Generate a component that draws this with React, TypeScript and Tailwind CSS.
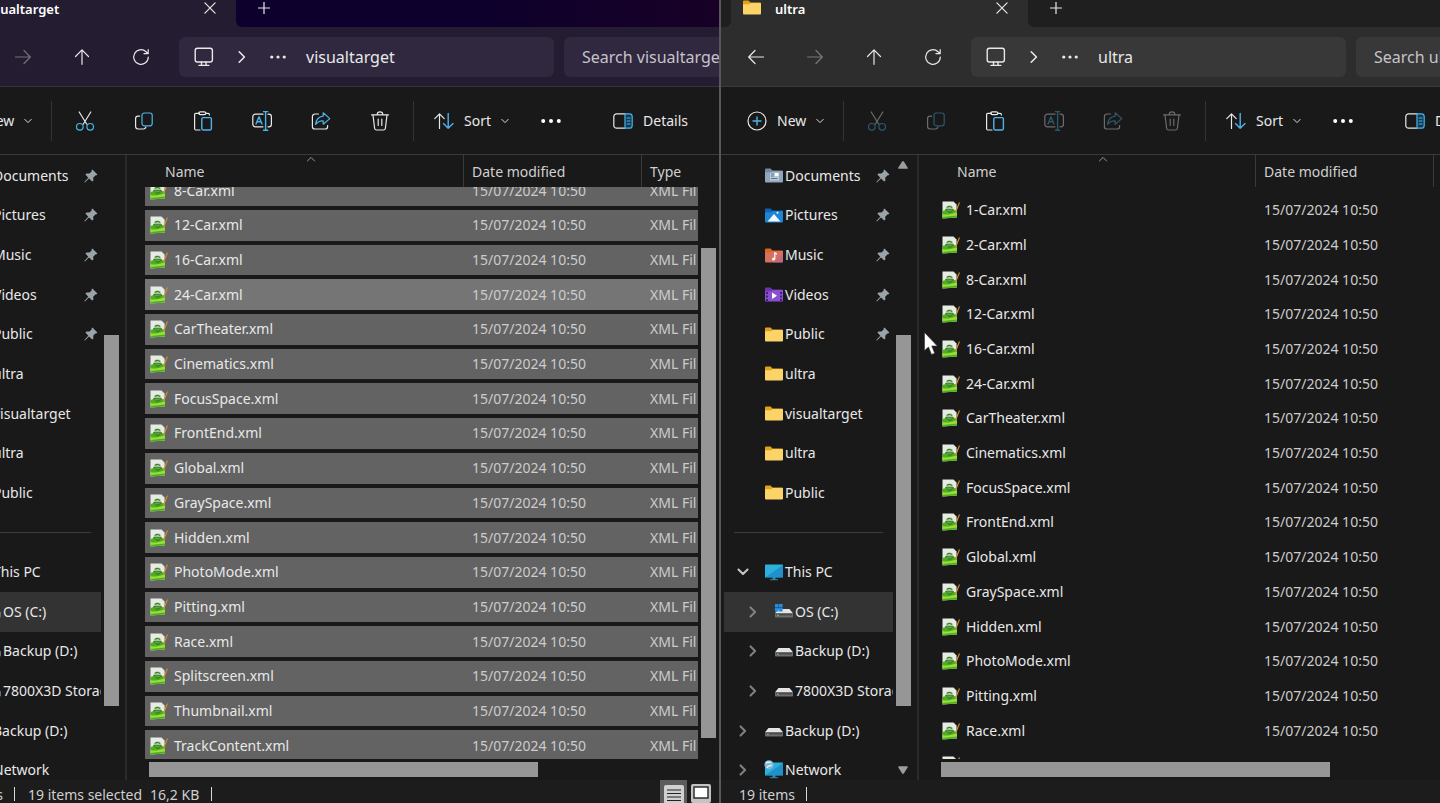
import { ReactNode } from "react";
import clsx from "clsx";

type Theme = "violet" | "dark";

type ExplorerProps = {
  title: string;
  theme: Theme;
  files: string[];
  selected?: boolean;
  hoveredFile?: string;
};

const FILES = [
  "1-Car.xml",
  "2-Car.xml",
  "8-Car.xml",
  "12-Car.xml",
  "16-Car.xml",
  "24-Car.xml",
  "CarTheater.xml",
  "Cinematics.xml",
  "FocusSpace.xml",
  "FrontEnd.xml",
  "Global.xml",
  "GraySpace.xml",
  "Hidden.xml",
  "PhotoMode.xml",
  "Pitting.xml",
  "Race.xml",
  "Splitscreen.xml",
  "Thumbnail.xml",
  "TrackContent.xml",
];

const QUICK_ACCESS = [
  { label: "Documents", icon: "documents", pinned: true },
  { label: "Pictures", icon: "pictures", pinned: true },
  { label: "Music", icon: "music", pinned: true },
  { label: "Videos", icon: "videos", pinned: true },
  { label: "Public", icon: "folder", pinned: true },
  { label: "ultra", icon: "folder" },
  { label: "visualtarget", icon: "folder" },
  { label: "ultra", icon: "folder" },
  { label: "Public", icon: "folder" },
];

const DEVICES = [
  { label: "This PC", icon: "pc", open: true },
  { label: "OS (C:)", icon: "os", nested: true, current: true },
  { label: "Backup (D:)", icon: "drive", nested: true },
  { label: "7800X3D Storage", icon: "drive", nested: true },
  { label: "Backup (D:)", icon: "drive" },
  { label: "Network", icon: "network" },
];

/**
 * Shared wrapper for the 20px line icons.
 */
const Line = ({
  children,
  className = "size-5",
}: {
  children: ReactNode;
  className?: string;
}) => (
  <svg
    viewBox="0 0 20 20"
    fill="none"
    stroke="currentColor"
    strokeWidth="1.2"
    strokeLinecap="round"
    strokeLinejoin="round"
    aria-hidden="true"
    className={clsx("shrink-0", className)}
  >
    {children}
  </svg>
);

const BLUE = "#4cb4ea";

const ArrowLeft = () => (
  <Line>
    <path d="M17.5 10H3M9 3.5L2.7 10 9 16.5" />
  </Line>
);

const ArrowRight = () => (
  <Line>
    <path d="M2.5 10H17M11 3.5l6.3 6.5-6.3 6.5" />
  </Line>
);

const ArrowUp = () => (
  <Line>
    <path d="M10 17.3V3M3.5 9.5L10 2.8l6.5 6.7" />
  </Line>
);

const Refresh = () => (
  <Line>
    <path d="M17.3 10A7.3 7.3 0 1 1 15 4.7l2 1.8M17.2 2.5v4.2H13" />
  </Line>
);

const Monitor = () => (
  <Line>
    <rect x="1.2" y="1.2" width="17.2" height="13.8" rx="2.2" strokeWidth="1.4" />
    <path d="M7.5 15v3M12 15v3M5 18.4h9.8" strokeWidth="1.4" />
  </Line>
);

const Chevron = ({ className, weight = 2 }: { className?: string; weight?: number }) => (
  <Line className={className}>
    <path d="M6.5 3.5L13 10l-6.5 6.5" strokeWidth={weight} />
  </Line>
);

const Dots = ({ className }: { className?: string }) => (
  <svg viewBox="0 0 20 20" className={className} fill="currentColor" aria-hidden="true">
    <circle cx="2.2" cy="10" r="2" />
    <circle cx="10" cy="10" r="2" />
    <circle cx="17.8" cy="10" r="2" />
  </svg>
);

const SmallDown = () => (
  <Line className="size-2">
    <path d="M2 6l8 8 8-8" strokeWidth="2.4" />
  </Line>
);

const NewIcon = () => (
  <Line>
    <circle cx="10" cy="10" r="9" />
    <path d="M10 6v8M6 10h8" stroke={BLUE} strokeWidth="1.4" />
  </Line>
);

const CutIcon = () => (
  <Line>
    <path d="M4.2 1l7.6 12.2M15.8 1L8.2 13.2" />
    <circle cx="4.8" cy="15.8" r="3.3" stroke={BLUE} />
    <circle cx="15.2" cy="15.8" r="3.3" stroke={BLUE} />
  </Line>
);

const CopyIcon = () => (
  <Line>
    <path d="M5.6 5.2H4a2.4 2.4 0 0 0-2.4 2.4v8A2.4 2.4 0 0 0 4 18h5.4a2.6 2.6 0 0 0 2.5-2" />
    <rect x="8" y="2" width="10.2" height="12.8" rx="2.2" stroke={BLUE} />
  </Line>
);

const PasteIcon = () => (
  <Line>
    <path d="M6.5 2.3H2.8a1.2 1.2 0 0 0-1.2 1.2v14.3A1.2 1.2 0 0 0 2.8 19H7M13 2.3h2.2a1.2 1.2 0 0 1 1.2 1.2V4" />
    <rect x="5.8" y="0.8" width="7" height="2.8" rx="1.4" />
    <rect x="8.8" y="6.6" width="9.6" height="12.4" rx="1.4" stroke={BLUE} strokeWidth="1.4" />
  </Line>
);

const RenameIcon = () => (
  <Line>
    <path d="M11 3.2H3.4A2.6 2.6 0 0 0 .8 5.8v7.4a2.6 2.6 0 0 0 2.6 2.6H11M16 3.2h.8a2.6 2.6 0 0 1 2.6 2.6v7.4a2.6 2.6 0 0 1-2.6 2.6H16" />
    <path d="M4 13l3-7.2L10 13M5 10.8h4M11.5.6h4.200M11.5 19.200h4.200M13.600.6v18.600" stroke={BLUE} strokeWidth="1.4" />
  </Line>
);

const ShareIcon = () => (
  <Line>
    <path d="M7.5 3H4A2.6 2.6 0 0 0 1.4 5.6V15.4A2.6 2.6 0 0 0 4 18h10a2.6 2.6 0 0 0 2.6-2.6V14.5" />
    <path
      d="M12.2 1.8l6.6 5.8-6.6 5.6v-3.3c-3.2-.2-5.6.9-7.6 3.6.3-4.7 3-7.8 7.6-8.4z"
      stroke={BLUE}
    />
  </Line>
);

const TrashIcon = () => (
  <Line>
    <path d="M1.5 3.8h17M7.2 3.6a2.8 2.8 0 0 1 5.6 0M3 4l1.6 13.2A2 2 0 0 0 6.6 19h6.8a2 2 0 0 0 2-1.8L17 4M8.2 8v6.5M11.8 8v6.5" />
  </Line>
);

const SortIcon = () => (
  <Line>
    <path d="M5.5 17.5V3M.8 7.6L5.5 2.8l4.7 4.8" />
    <path d="M14.2 2.5V17M9.5 12.4l4.7 4.8 4.8-4.8" stroke={BLUE} strokeWidth="1.4" />
  </Line>
);

const DetailsIcon = () => (
  <Line>
    <path d="M12 2.8H3.6A2.8 2.8 0 0 0 .8 5.6v8.8a2.8 2.8 0 0 0 2.8 2.8H12" />
    <path
      d="M12 2.8h4.4a2.8 2.8 0 0 1 2.8 2.8v8.8a2.8 2.8 0 0 1-2.8 2.8H12zM14.2 7h2.8M14.2 10h2.8M14.2 13h2.8"
      fill="#123a52"
      stroke={BLUE}
    />
  </Line>
);

const PinIcon = () => (
  <svg viewBox="0 0 14 14" className="size-3.5" fill="#9aa3a8" aria-hidden="true">
    <path d="M8.4.6l5 5-1.200 1-.9-.1-2.100 2.300.2 2.700-1.200 1L5 9.400.9 13.500l-.6-.5L4.300 8.700 1.400 5.600l1.100-1.100 2.900.1 2.300-2-.2-1z" />
  </svg>
);

/**
 * Yellow folder, or one of the tinted library folders.
 */
const FolderIcon = ({ type }: { type: string }) => {
  const tints: Record<string, [string, string]> = {
    folder: ["#e3a01b", "#fbd366"],
    documents: ["#7389a0", "#8fa6bd"],
    pictures: ["#0f62b5", "#1d84d6"],
    music: ["#d9661f", "#d6705f"],
    videos: ["#6a34ad", "#8a4fd0"],
  };
  const [back, front] = tints[type];

  return (
    <svg viewBox="0 0 18 15" className="h-[15px] w-[18px] shrink-0" aria-hidden="true">
      <path d="M0 1.5A1 1 0 0 1 1 .5h4.5L7.5 2.5H17a1 1 0 0 1 1 1V8H0z" fill={back} />
      <path d="M0 4.3h6L7.8 3H17a1 1 0 0 1 1 1v9.5a1 1 0 0 1-1 1H1a1 1 0 0 1-1-1z" fill={front} />
      {type === "documents" && (
        <>
          <rect x="5" y="4.5" width="9" height="8" fill="#b9cadb" />
          <path d="M6 6h3M6 8h3M6 10.5h6.5" stroke="#5f7488" />
          <rect x="10" y="5" width="3.5" height="3" fill="#fff" />
        </>
      )}
      {type === "pictures" && (
        <>
          <path d="M2.5 13.5L9 6l6.5 7.5z" fill="#f1f8ff" />
          <circle cx="12.5" cy="4.8" r="1" fill="#fff" />
        </>
      )}
      {type === "music" && (
        <>
          <path d="M8 14.5L18 6v7.5a1 1 0 0 1-1 1z" fill="#b5648c" opacity=".6" />
          <path d="M9.8 11V4.8l2.2 1.4" fill="none" stroke="#fff" strokeWidth="1.2" />
          <circle cx="8.6" cy="11" r="1.6" fill="#fff" />
        </>
      )}
      {type === "videos" && (
        <>
          <path d="M2 5v9M16 5v9" stroke="#3d1a72" strokeWidth="1.8" strokeDasharray="2 1.5" />
          <path d="M7 5.5v6.5l5-3.2z" fill="#fff" />
        </>
      )}
    </svg>
  );
};

const DriveIcon = ({ system }: { system?: boolean }) => (
  <svg viewBox="0 0 18 16" className="h-4 w-[18px] shrink-0" aria-hidden="true">
    <path d="M3.5 5h11L18 9.2H0z" fill="#e4e4e4" />
    <rect y="9" width="18" height="4.5" rx=".8" fill="#6d6d6d" />
    <path d="M1 10.8h16" stroke="#3c3c3c" />
    <rect x="2" y="10.6" width="1.8" height="1.2" fill="#5fd35f" />
    {system && (
      <path d="M0 0h3.600v3.600H0zM4 0h3.600v3.600H4zM0 4h3.600v3.600H0zM4 4h3.600v3.600H4z" fill="#1f8fe6" />
    )}
  </svg>
);

const ScreenIcon = ({ globe }: { globe?: boolean }) => (
  <svg viewBox="0 0 20 20" className="-mx-px size-5 shrink-0" aria-hidden="true">
    <path d="M8.5 15h3v2.5h-3zM6 17.2h8v1H6z" fill="#2d86ab" />
    <rect x="1" y="2.5" width="18" height="13" rx=".6" fill="#2cb1dd" />
    <path d="M1 15.500L19 3v12.500z" fill="#1679bb" opacity=".55" />
    {globe && (
      <>
        <circle cx="5" cy="4.8" r="4.6" fill="#7fb9d6" />
        <path d="M2 3c2-2 3 .5 5-1M3 8c.5-3 3-2 5-3" stroke="#e9f6fc" fill="none" strokeWidth="1.3" />
      </>
    )}
  </svg>
);

const TreeIcon = ({ type }: { type: string }) => {
  switch (type) {
    case "pc":
      return <ScreenIcon />;
    case "network":
      return <ScreenIcon globe />;
    case "os":
      return <DriveIcon system />;
    case "drive":
      return <DriveIcon />;
    default:
      return <FolderIcon type={type} />;
  }
};

const FileIcon = () => (
  <svg viewBox="0 0 18 18" className="size-[18px] shrink-0" aria-hidden="true">
    <path d="M.5.5h11L14.500 3.500l.5 13L.5 17.500z" fill="#e6ebe4" />
    <path d="M.5 10C4 8.500 10 8.500 14.800 9.500l.2 7L.5 17.500z" fill="#4fae20" />
    <path d="M.5 13c4 1.500 8 0 14.400-1.500l.1 3L.5 16z" fill="#9be03a" />
    <ellipse cx="7.500" cy="7" rx="3.600" ry="2.600" fill="#9cc78d" />
    <path d="M3 8.800h9M5 6.500c1-1.500 3.500-1.500 5 0M5.500 10.500c1.500 1 3.500 1 5-.5" stroke="#2f6b22" fill="none" />
    <path d="M17.500 1.500L13.400 11.500" stroke="#d08f2c" strokeWidth="1.200" />
  </svg>
);

const SortMark = () => (
  <Line className="h-2 w-2.5 text-[#a8a8a8]">
    <path d="M1 15l9-9 9 9" strokeWidth="2.2" />
  </Line>
);

const NavButton = ({
  label,
  disabled,
  children,
}: {
  label: string;
  disabled?: boolean;
  children: ReactNode;
}) => (
  <button
    type="button"
    aria-label={label}
    disabled={disabled}
    className="flex h-10 w-[59px] shrink-0 items-center justify-center disabled:opacity-40"
  >
    {children}
  </button>
);

const ScrollArrow = ({ down, visible }: { down?: boolean; visible: boolean }) => (
  <span
    className={clsx(
      "flex h-5 items-center text-[#9d9d9d]",
      down && "mt-auto rotate-180",
      !visible && "invisible",
    )}
  >
    <svg viewBox="0 0 10 8" className="h-2 w-2.5" fill="currentColor" aria-hidden="true">
      <path d="M4 .8a1.200 1.200 0 0 1 2 0L9.600 6.500a.9.900 0 0 1-.8 1.300H1.200a.9.900 0 0 1-.8-1.300z" />
    </svg>
  </span>
);

const Sidebar = ({ hovered }: { hovered: boolean }) => (
  <aside className="flex w-[199px] shrink-0 border-r-2 border-[#2b2b2b]">
    <nav className="min-w-0 flex-1 overflow-hidden pl-1 pt-px">
      <ul className="grid h-[634px] auto-rows-fr">
        {QUICK_ACCESS.map((item, index) => (
          <li key={index} className="flex items-center pl-[41px] pr-[3px]">
            <FolderIcon type={item.icon} />
            <a href="#" className="ml-0.5 flex-1">
              {item.label}
            </a>
            {item.pinned && <PinIcon />}
          </li>
        ))}
        <li role="separator" className="flex items-center px-2.5">
          <span className="h-px w-full bg-[#3c3c3c]" />
        </li>
        {DEVICES.map((item, index) => (
          <li
            key={index}
            className={clsx(
              "flex items-center overflow-hidden whitespace-nowrap",
              item.nested ? "pl-[22px]" : "pl-3",
              item.current && "bg-[#333333]",
            )}
          >
            <button type="button" aria-label={`Expand ${item.label}`} className="mr-[15px] shrink-0">
              <Chevron
                weight={3}
                className={clsx(
                  "size-3.5",
                  item.open ? "rotate-90 text-[#c4c4c4]" : "text-[#808080]",
                )}
              />
            </button>
            <TreeIcon type={item.icon} />
            <a href="#" className="ml-0.5">
              {item.label}
            </a>
          </li>
        ))}
      </ul>
    </nav>
    <div className="flex w-6 flex-col items-center pr-1">
      <ScrollArrow visible={hovered} />
      <span className="mt-[160px] h-[371px] w-[15px] bg-[#969696]" />
      <ScrollArrow down visible={hovered} />
    </div>
  </aside>
);

const FileTable = ({
  files,
  selected,
  hoveredFile,
}: Pick<ExplorerProps, "files" | "selected" | "hoveredFile">) => (
  <div className="flex min-w-0 flex-1">
    <div className="flex min-w-0 flex-1 flex-col">
      <table className="block min-h-0 flex-1 overflow-hidden whitespace-nowrap">
        <thead className="relative z-10 block bg-[#191919] text-[#d0d0d0]">
          <tr className="flex h-8">
            <th className="relative flex w-[337px] shrink-0 items-center border-r border-[#3a3a3a] pl-[38px] pt-0.5 font-normal">
              Name
              <span className="absolute inset-x-0 top-0 flex justify-center pl-8">
                <SortMark />
              </span>
            </th>
            <th className="flex w-[178px] shrink-0 items-center border-r border-[#3a3a3a] pl-2 pt-0.5 font-normal">
              Date modified
            </th>
            <th className="flex items-center pl-2 pt-0.5 font-normal">Type</th>
          </tr>
        </thead>
        <tbody
          className={clsx(
            "ml-[18px] grid h-[659px] auto-rows-fr",
            selected ? "-mt-[83px]" : "mt-1.5",
          )}
        >
          {files.map((file) => {
            const fill = selected && (file === hoveredFile ? "bg-[#757575]" : "bg-[#636363]");
            return (
              <tr key={file} className="flex overflow-hidden py-0.5">
                <td className={clsx("flex w-[319px] shrink-0 items-center gap-1.5 pl-[5px]", fill)}>
                  <FileIcon />
                  {file}
                </td>
                <td className={clsx("flex w-[178px] shrink-0 items-center pl-2 text-[#cccccc]", fill)}>
                  15/07/2024 10:50
                </td>
                <td className={clsx("flex min-w-0 flex-1 items-center pl-2 pr-0.5 text-[#cccccc]", fill)}>
                  <span className="overflow-hidden">XML File</span>
                </td>
              </tr>
            );
          })}
        </tbody>
      </table>
      <div className="flex h-[21px] shrink-0 items-center pl-[22px]">
        <span className="h-[15px] w-[389px] bg-[#969696]" />
      </div>
    </div>
    <div className="w-[22px] shrink-0 pl-[3px]">
      <div className="mt-[93px] h-[490px] w-[15px] bg-[#969696]" />
    </div>
  </div>
);

const Explorer = ({ title, theme, files, selected, hoveredFile }: ExplorerProps) => {
  const violet = theme === "violet";
  const frame = violet ? "bg-[#241c30]" : "bg-[#2d2d2d]";
  const strip = violet
    ? "bg-linear-to-r from-[#0d002c] from-50% to-[#180026]"
    : "bg-[#1f1f1f]";
  const field = violet ? "bg-[#30283e]" : "bg-[#383838]";

  return (
    <section
      aria-label={title}
      className={clsx(
        "h-full w-1/2 overflow-hidden border-[#5a5660] bg-[#191919]",
        violet ? "border-r" : "border-l",
      )}
    >
      <div
        className={clsx(
          "flex h-full w-[calc(100%+73px)] flex-col",
          violet ? "-ml-[72px]" : "-ml-px",
        )}
      >
        <header className={clsx("shrink-0 border-b", frame, violet ? "border-[#37323e]" : "border-[#3a3a3a]")}>
          <div className="flex h-[27px]">
            <span className={clsx("w-[11px] rounded-br-md", strip)} />
            <div className="flex h-[18px] w-[297px] items-center pl-3 pr-5">
              <span className="-mt-1">
                <FolderIcon type="folder" />
              </span>
              <span className="ml-3.5 flex-1 text-[13px] font-semibold text-white">{title}</span>
              <button type="button" aria-label="Close tab" className="-mt-0.5">
                <Line className="size-3">
                  <path d="M1.5 1.5l17 17M18.5 1.5l-17 17" strokeWidth="2" />
                </Line>
              </button>
            </div>
            <div className={clsx("flex-1 rounded-bl-md pl-[22px]", strip)}>
              <button type="button" aria-label="New tab" className="mt-0.5 block">
                <Line className="size-3">
                  <path d="M10 0v20M0 10h20" strokeWidth="2" />
                </Line>
              </button>
            </div>
          </div>
          <div className="flex h-[59px] items-center pl-1.5">
            <NavButton label="Back">
              <ArrowLeft />
            </NavButton>
            <NavButton label="Forward" disabled>
              <ArrowRight />
            </NavButton>
            <NavButton label="Up">
              <ArrowUp />
            </NavButton>
            <NavButton label="Refresh">
              <Refresh />
            </NavButton>
            <div
              className={clsx(
                "ml-[9px] flex h-10 w-[375px] shrink-0 items-center gap-5 rounded-md pl-[15px] text-base",
                field,
              )}
            >
              <Monitor />
              <Chevron className="size-4" />
              <Dots className="size-4" />
              <a href="#">{title}</a>
            </div>
            <input
              type="search"
              aria-label={`Search ${title}`}
              placeholder={`Search ${title}`}
              className={clsx(
                "ml-2.5 h-10 w-[240px] shrink-0 rounded-md pl-[18px] text-base placeholder:text-[#c6c3ca]",
                field,
              )}
            />
          </div>
        </header>

        <div className="flex h-[68px] shrink-0 items-center whitespace-nowrap border-b border-[#3a3a3a]">
          <button type="button" className="ml-[27px] flex items-center gap-2.5">
            <NewIcon />
            <span>New</span>
            <SmallDown />
          </button>
          <span className="ml-auto h-10 w-px bg-[#333333]" />
          <div className="ml-[3px] flex">
            <NavButton label="Cut" disabled={!selected}>
              <CutIcon />
            </NavButton>
            <NavButton label="Copy" disabled={!selected}>
              <CopyIcon />
            </NavButton>
            <NavButton label="Paste">
              <PasteIcon />
            </NavButton>
            <NavButton label="Rename" disabled={!selected}>
              <RenameIcon />
            </NavButton>
            <NavButton label="Share" disabled={!selected}>
              <ShareIcon />
            </NavButton>
            <NavButton label="Delete" disabled={!selected}>
              <TrashIcon />
            </NavButton>
          </div>
          <span className="ml-1 h-10 w-px bg-[#333333]" />
          <button type="button" className="ml-5 flex items-center gap-2.5">
            <SortIcon />
            <span>Sort</span>
            <SmallDown />
          </button>
          <button type="button" aria-label="More" className="ml-8 text-white">
            <Dots className="size-5" />
          </button>
          <button type="button" className="ml-[52px] mr-8 flex items-center gap-2.5">
            <DetailsIcon />
            <span>Details</span>
          </button>
        </div>

        <div className="flex min-h-0 flex-1">
          <Sidebar hovered={!selected} />
          <FileTable files={files} selected={selected} hoveredFile={hoveredFile} />
        </div>

        <footer className="flex h-[23px] shrink-0 items-end bg-[#1c1c1c] pl-[19px] leading-4 text-[#cfcfcf]">
          <span className="w-[67px]">19 items</span>
          <span className="mb-0.5 h-3.5 w-px bg-[#d8d8d8]" />
          {selected && (
            <>
              <span className="ml-[13px]">19 items selected</span>
              <span className="ml-2">16,2 KB</span>
              <span className="mb-0.5 ml-3 h-3.5 w-px bg-[#d8d8d8]" />
            </>
          )}
          <div className="ml-auto mr-[9px] flex h-full items-start gap-1">
            <button type="button" aria-label="Details view" className="flex h-full w-[27px] justify-center bg-[#5c5c5c] pt-[5px]">
              <svg viewBox="0 0 20 19" className="h-[19px] w-5" aria-hidden="true">
                <rect width="20" height="19" rx="2" fill="#d0d0d0" />
                <path d="M3 5h14M3 8.5h14M3 12h14M3 15.5h14" stroke="#222" strokeWidth="1.2" />
              </svg>
            </button>
            <button type="button" aria-label="Large icons view" className="pt-1">
              <svg viewBox="0 0 20 19" className="h-[19px] w-5" aria-hidden="true">
                <rect width="20" height="19" rx="2" fill="#c4c4c4" />
                <rect x="3" y="3" width="14" height="11" fill="#fff" stroke="#222" strokeWidth="1.4" />
              </svg>
            </button>
          </div>
        </footer>
      </div>
    </section>
  );
};

const Cursor = () => (
  <svg
    viewBox="0 0 14 24"
    className="pointer-events-none absolute left-[924px] top-[332px] z-20 h-6 w-3.5"
    aria-hidden="true"
  >
    <path d="M.5.500v18l4-3.500 3 7.500 3.200-1.300L7.700 14h5.600z" fill="#fff" stroke="#333" strokeWidth=".6" />
  </svg>
);

const App = () => (
  <main className="relative flex h-screen overflow-hidden bg-[#191919] font-['Noto_Sans','Open_Sans',sans-serif] text-sm text-[#e8e8e8]">
    <Explorer
      title="visualtarget"
      theme="violet"
      files={FILES}
      selected
      hoveredFile="24-Car.xml"
    />
    <Explorer title="ultra" theme="dark" files={FILES} />
    <Cursor />
  </main>
);

export default App;
